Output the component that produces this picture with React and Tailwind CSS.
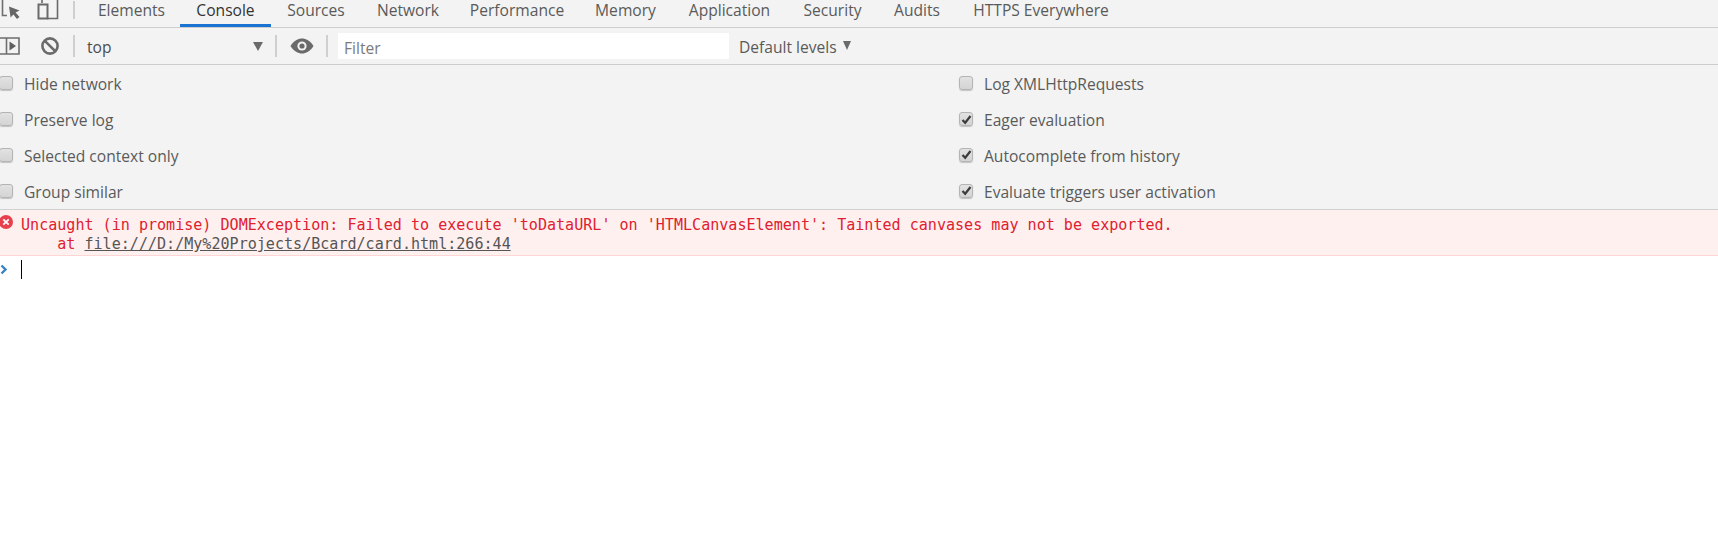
import React from 'react';

const tabs = [
  { name: 'Elements', w: 'w-[97px]' },
  { name: 'Console', w: 'w-[91px]', active: true },
  { name: 'Sources', w: 'w-[90px]' },
  { name: 'Network', w: 'w-[94px]' },
  { name: 'Performance', w: 'w-[124px]' },
  { name: 'Memory', w: 'w-[93px]' },
  { name: 'Application', w: 'w-[115px]' },
  { name: 'Security', w: 'w-[91px]' },
  { name: 'Audits', w: 'w-[78px]' },
  { name: 'HTTPS Everywhere', w: 'w-[170px]' },
];

const leftOptions = ['Hide network', 'Preserve log', 'Selected context only', 'Group similar'];
const rightOptions = [
  { label: 'Log XMLHttpRequests' },
  { label: 'Eager evaluation', checked: true },
  { label: 'Autocomplete from history', checked: true },
  { label: 'Evaluate triggers user activation', checked: true },
];

const Divider = () => <div className="w-[2px] h-[22px] bg-[#cfcfcf] shrink-0" />;

const Checkbox = ({ checked }) => (
  <span className="w-[14px] h-[14px] rounded-[3px] border border-[#b4b4b4] bg-gradient-to-b from-[#e2e2e2] to-[#d4d4d4] shadow-[0_1px_1px_rgba(0,0,0,0.2)] flex items-center justify-center shrink-0 -mt-[3px]">
    {checked && (
      <svg width="11" height="11" viewBox="0 0 11 11">
        <path d="M1.5 6 L4.2 8.8 L9.5 2" fill="none" stroke="#3c3c3c" strokeWidth="2.2" />
      </svg>
    )}
  </span>
);

const Option = ({ label, checked }) => (
  <div className="flex items-center h-[35.8px] gap-[11px] text-[15.6px] text-[#5a5a5a]">
    <Checkbox checked={checked} />
    <span>{label}</span>
  </div>
);

export default function App() {
  return (
    <div className="w-[1718px] h-[550px] bg-white overflow-hidden font-['Open_Sans',sans-serif]">
      {/* Tab strip */}
      <div className="h-[28px] bg-[#f3f3f3] border-b border-[#cdcdcd] flex items-stretch">
        <div className="w-[83px] flex items-center shrink-0">
          <svg width="83" height="27" viewBox="0 0 83 27" className="shrink-0">
            <path d="M2.5 -2 V15.5 H7 M14 -1 H18" fill="none" stroke="#6e6e6e" strokeWidth="1.6" />
            <path d="M9 6.5 L19.5 10.5 L15.6 12.6 L19.5 17 L17 19 L13.4 14.6 L10.6 17.6 Z" fill="#666" />
            <path d="M38.5 4.5 H47.5 V18.5 H38.5 Z" fill="none" stroke="#6a6a6a" strokeWidth="2" />
            <path d="M42 -1 V3 M48 -1 H57.5 V18.5 H47" fill="none" stroke="#6a6a6a" strokeWidth="1.6" />
            <rect x="73" y="1" width="2" height="18" fill="#cfcfcf" />
          </svg>
        </div>
        <div className="flex items-stretch">
          {tabs.map((tab) => (
            <div
              key={tab.name}
              className={`${tab.w} flex items-start justify-center -mt-[1px] text-[15.6px] whitespace-nowrap ${tab.active ? 'text-[#333333] border-b-[3px] border-[#1a73d0] h-[28px]' : 'text-[#5a5a5a]'}`}
            >
              {tab.name}
            </div>
          ))}
        </div>
      </div>

      {/* Console toolbar */}
      <div className="h-[37px] bg-[#f3f3f3] border-b border-[#cdcdcd] flex items-center">
        <svg width="20" height="18" viewBox="0 0 20 18" className="shrink-0">
          <path d="M0 1 H19 V17 H0 M6.5 1 V17" fill="none" stroke="#6e6e6e" strokeWidth="1.6" />
          <path d="M9.5 4.5 L16 9 L9.5 13.5 Z" fill="#5f5f5f" />
        </svg>
        <svg width="20" height="20" viewBox="0 0 20 20" className="ml-[20px] shrink-0">
          <circle cx="10" cy="10" r="7.6" fill="none" stroke="#6a6a6a" strokeWidth="2.6" />
          <path d="M4.6 4.6 L15.4 15.4" stroke="#6a6a6a" strokeWidth="2.6" />
        </svg>
        <div className="ml-[13px]"><Divider /></div>
        <div className="w-[166px] ml-[12px] pt-[3px] text-[15.6px] text-[#4c4c4c] shrink-0">top</div>
        <div className="w-0 h-0 border-l-[5px] border-r-[5px] border-t-[9px] border-l-transparent border-r-transparent border-t-[#6a6a6a] shrink-0" />
        <div className="ml-[12px]"><Divider /></div>
        <svg width="24" height="16" viewBox="0 0 24 16" className="ml-[13px] shrink-0">
          <path d="M0.5 8 C4 2.5 8 0.5 12 0.5 C16 0.5 20 2.5 23.5 8 C20 13.5 16 15.5 12 15.5 C8 15.5 4 13.5 0.5 8 Z" fill="#6a6a6a" />
          <circle cx="12" cy="8" r="4.6" fill="#f3f3f3" />
          <circle cx="12" cy="8" r="2.6" fill="#6a6a6a" />
        </svg>
        <div className="ml-[12px]"><Divider /></div>
        <div className="ml-[10px] w-[391px] h-[26px] bg-white pl-[6px] pt-[5px] flex items-center text-[15.6px] text-[#7b7b7b] shrink-0">Filter</div>
        <div className="ml-[10px] pt-[4px] text-[15.6px] text-[#5a5a5a]">Default levels</div>
        <div className="ml-[6px] -mt-[2px] w-0 h-0 border-l-[4.5px] border-r-[4.5px] border-t-[9px] border-l-transparent border-r-transparent border-t-[#6a6a6a]" />
      </div>

      {/* Console settings */}
      <div className="h-[145px] bg-[#f3f3f3] border-b border-[#d0d0d0] grid grid-cols-[959px_1fr] pt-[2px]">
        <div className="-ml-[1px]">
          {leftOptions.map((label) => (
            <Option key={label} label={label} />
          ))}
        </div>
        <div>
          {rightOptions.map((opt) => (
            <Option key={opt.label} label={opt.label} checked={opt.checked} />
          ))}
        </div>
      </div>

      {/* Error message */}
      <div className="h-[46px] bg-[#fff0f0] border-b border-[#ffd6d6] relative pl-[21px] pt-[6px] font-['DejaVu_Sans_Mono',monospace] text-[15.07px] leading-[19px] text-[#e0202e] whitespace-pre">
        <svg width="14" height="14" viewBox="0 0 14 14" className="absolute left-[-1px] top-[5px]">
          <circle cx="7" cy="7" r="7" fill="#e8404c" />
          <path d="M4.3 4.3 L9.7 9.7 M9.7 4.3 L4.3 9.7" stroke="#fff" strokeWidth="1.8" />
        </svg>
        <div>Uncaught (in promise) DOMException: Failed to execute 'toDataURL' on 'HTMLCanvasElement': Tainted canvases may not be exported.</div>
        <div>{'    at '}<span className="text-[#555555] underline">file:///D:/My%20Projects/Bcard/card.html:266:44</span></div>
      </div>

      {/* Prompt */}
      <div className="flex items-start pt-[4px]">
        <svg width="8" height="11" viewBox="0 0 8 11" className="mt-[4px] shrink-0">
          <path d="M1.5 1.5 L5.5 5.5 L1.5 9.5" fill="none" stroke="#3b82c4" strokeWidth="2.4" />
        </svg>
        <div className="ml-[13px] w-[1px] h-[19px] bg-black" />
      </div>
    </div>
  );
}
